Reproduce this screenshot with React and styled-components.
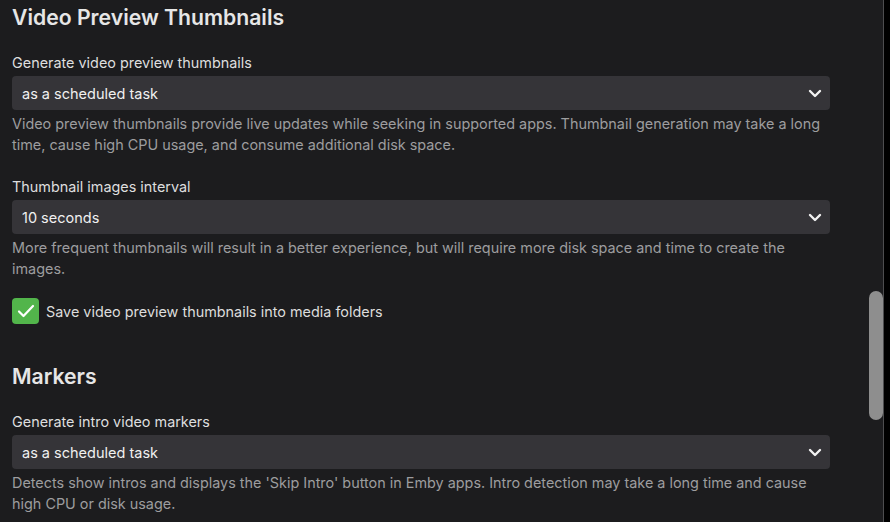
import React from 'react';
import styled, {createGlobalStyle} from 'styled-components'

const GlobalStyle=createGlobalStyle`
html, body {
  margin:0;
  padding:0;
  background:#000;
}
body {
  font-family:Inter, "Noto Sans", "Liberation Sans", sans-serif;
  -webkit-font-smoothing:antialiased;
}
`

const Panel=styled.div`
position:relative;
box-sizing:border-box;
width:884px;
height:522px;
overflow:hidden;
background:#1c1c1e;
border-right:1px solid #4d4d4f;
padding:4px 0 0 12px;
`

const Content=styled.div`
width:818px;
`

const Heading=styled.h2`
margin:0 0 23px;
font-size:21.2px;
line-height:26px;
font-weight:600;
color:#e6e6e6;
`

const Field=styled.div`
margin-bottom:${({last})=>last?'19px':'22px'};
`

const Label=styled.label`
display:block;
font-size:14.4px;
line-height:20px;
color:#dedede;
margin-bottom:3px;
`

const SelectBox=styled.div`
display:flex;
align-items:center;
justify-content:space-between;
height:34px;
box-sizing:border-box;
padding:0 7px 0 10px;
background:#353438;
border-radius:4px;
font-size:14.5px;
color:#f0f0f0;
`

const Desc=styled.div`
margin-top:3px;
font-size:14.4px;
line-height:21px;
color:#9d9d9f;
`

const CheckRow=styled.label`
display:flex;
align-items:center;
gap:7px;
height:26px;
margin-bottom:39px;
font-size:14.4px;
color:#dcdcdc;
`

const Box=styled.span`
display:flex;
align-items:center;
justify-content:center;
width:27px;
height:26px;
border-radius:4px;
background:#52b54b;
`

const Thumb=styled.div`
position:absolute;
right:0;
top:291px;
width:14px;
height:129px;
border-radius:7px;
background:#8e8e8e;
`

function Chevron() {
    return (
        <svg width="16" height="10" viewBox="0 0 16 10">
            <polyline points="3,3 8,8 13,3" fill="none" stroke="#f2f2f2" strokeWidth="2.4" strokeLinecap="round" strokeLinejoin="round"/>
        </svg>
    )
}

function Select({label, value, desc, last}) {
    return (
        <Field last={last}>
            <Label>{label}</Label>
            <SelectBox>
                <span>{value}</span>
                <Chevron/>
            </SelectBox>
            <Desc>{desc}</Desc>
        </Field>
    )
}

export default function App() {
    return (
        <>
            <GlobalStyle/>
            <Panel>
                <Content>
                    <Heading>Video Preview Thumbnails</Heading>
                    <Select
                        label="Generate video preview thumbnails"
                        value="as a scheduled task"
                        desc="Video preview thumbnails provide live updates while seeking in supported apps. Thumbnail generation may take a long time, cause high CPU usage, and consume additional disk space."/>
                    <Select
                        last
                        label="Thumbnail images interval"
                        value="10 seconds"
                        desc="More frequent thumbnails will result in a better experience, but will require more disk space and time to create the images."/>
                    <CheckRow>
                        <Box>
                            <svg width="18" height="14" viewBox="0 0 18 14">
                                <polyline points="2,7.5 6.5,12 16,2" fill="none" stroke="#fff" strokeWidth="2.2" strokeLinecap="round" strokeLinejoin="round"/>
                            </svg>
                        </Box>
                        Save video preview thumbnails into media folders
                    </CheckRow>

                    <Heading>Markers</Heading>
                    <Select
                        label="Generate intro video markers"
                        value="as a scheduled task"
                        desc="Detects show intros and displays the 'Skip Intro' button in Emby apps. Intro detection may take a long time and cause high CPU or disk usage."/>
                </Content>
                <Thumb/>
            </Panel>
        </>
    );
}
